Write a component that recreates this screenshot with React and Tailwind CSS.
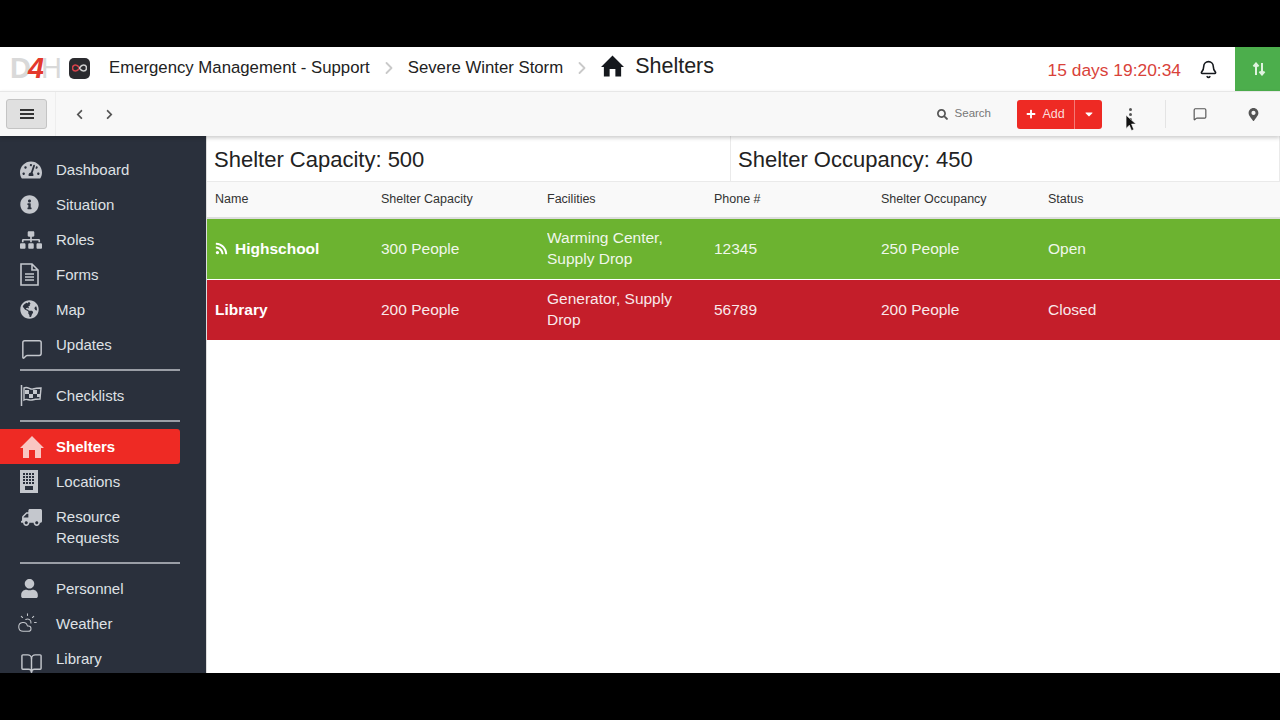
import React from "react";
import { FaTachometerAlt, FaInfoCircle, FaSitemap, FaGlobeAmericas, FaTruck, FaUser, FaRss, FaSearch, FaPlus, FaCaretDown, FaMapMarkerAlt, FaChevronLeft, FaChevronRight } from "react-icons/fa";
import { MessageSquare, CloudSun, BookOpen, Bell, ChevronRight } from "lucide-react";

const HomeIcon = ({ w, h, className = "" }) => (
  <svg width={w} height={h} viewBox="0 0 24 22" fill="currentColor" className={className}>
    <path d="M12 0 24 12h-3v10h-6v-8H9v8H3V12H0z" />
  </svg>
);

const FileIcon = () => (
  <svg width="19" height="23" viewBox="0 0 19 23" fill="none" stroke="currentColor" strokeWidth="1.6">
    <path d="M1 1h11l6 6v15H1zM12 1v6h6M5 11h9M5 14h9M5 17h9" />
  </svg>
);

const FlagIcon = () => (
  <svg width="23" height="23" viewBox="0 0 23 23" fill="none">
    <path d="M1.5 1v21" stroke="currentColor" strokeWidth="1.5" />
    <path d="M4 4c4-2 6 2 9 1s5-1 8-1l-1 11c-3 0-5 0-8 1s-5-2-8 0z" stroke="currentColor" strokeWidth="1.4" />
    <path d="M5 6h4v4H5zM13 6h4v4h-4zM9 10h4v4H9zM17 10h3v3h-3z" fill="currentColor" />
  </svg>
);

const BuildingIcon = () => {
  const dots = [];
  for (let y = 3; y < 14; y += 3) for (let x = 3; x < 15; x += 3) dots.push(<rect key={`${x}-${y}`} x={x} y={y} width="2" height="2" fill="#2a303c" />);
  return (
    <svg width="18" height="23" viewBox="0 0 18 23">
      <rect width="18" height="23" fill="currentColor" />
      {dots}
      <path d="M5 16h8v4H5z" fill="#2a303c" />
    </svg>
  );
};

const Item = ({ icon, label, active, cls = "" }) => (
  <div className={`flex items-center h-[35px] w-[180px] shrink-0 rounded-r-[3px] ${active ? "bg-[#ee2a24] font-bold text-white" : "text-[#dfe1e5]"} ${cls}`}>
    <div className={`w-[56px] h-full shrink-0 flex items-center pl-[20px] ${active ? "text-[#f9c6c2]" : "text-[#c4c7cd]"}`}>{icon}</div>
    <span className="leading-[21px]">{label}</span>
  </div>
);

const Divider = () => <div className="h-[2px] w-[160px] ml-[20px] bg-[#9a9ea6] shrink-0" />;

const COLS = "grid grid-cols-[166px_166px_167px_167px_167px_1fr] items-center";

const Row = ({ bg, name, icon, cap, fac, phone, occ, status }) => (
  <div className={`${COLS} h-[60px] pb-[2px] mb-[1px] text-white text-[15.5px] leading-[21px] ${bg}`}>
    <div className="pl-2 flex items-center gap-[7px] font-bold">{icon}{name}</div>
    <div className="pl-2 opacity-90">{cap}</div>
    <div className="pl-2 pr-6 opacity-90">{fac}</div>
    <div className="pl-2 opacity-90">{phone}</div>
    <div className="pl-2 opacity-90">{occ}</div>
    <div className="pl-2 opacity-90">{status}</div>
  </div>
);

export default function App() {
  return (
    <div className="h-screen w-[1280px] flex flex-col bg-black overflow-hidden font-['Liberation_Sans',Arial,sans-serif]">
      <div className="h-[47px] shrink-0 bg-black" />
      <div className="flex-1 min-h-0 flex flex-col bg-white overflow-hidden">
        {/* top bar */}
        <div className="h-[44px] shrink-0 flex items-center bg-white text-[#222]">
          <div className="w-[109px] shrink-0 flex items-center pl-[10px] -mt-[2px]">
            <span className="w-[56px] text-[29px] leading-none font-bold tracking-[-3px] text-[#d9d9d9]">D<span className="text-[#e4392c] italic">4</span><span className="font-normal">H</span></span>
            <div className="w-[21px] h-[21px] ml-[3px] rounded-[5px] bg-[#2b2b2f] flex items-center justify-center">
              <svg width="15" height="8" viewBox="0 0 30 16" fill="none" strokeWidth="3"><path d="M15 8C12 3 9 2 7 2a6 6 0 0 0 0 12c2 0 5-1 8-6" stroke="#d8434b" /><path d="M15 8c3-5 6-6 8-6a6 6 0 0 1 0 12c-2 0-5-1-8-6" stroke="#cfcfcf" /></svg>
            </div>
          </div>
          <span className="text-[16.75px] -mt-[3px]">Emergency Management - Support</span>
          <ChevronRight size={20} className="text-[#c9c9c9] ml-[9px] mr-[9px] -mt-[3px]" strokeWidth={2.2} />
          <span className="text-[16.75px] -mt-[3px]">Severe Winter Storm</span>
          <ChevronRight size={20} className="text-[#c9c9c9] ml-[9px] mr-[9px] -mt-[3px]" strokeWidth={2.2} />
          <HomeIcon w={23} h={22} className="text-[#15181d] -mt-[7px] mr-[11px]" />
          <span className="text-[21.5px] -mt-[6px]">Shelters</span>
          <span className="ml-auto text-[17.4px] text-[#d9423a] mt-[3px]">15 days 19:20:34</span>
          <Bell size={19} className="ml-[18px] text-[#15181d] mr-[17px]" strokeWidth={2} />
          <div className="w-[45px] h-full bg-[#4cae4c] flex items-center justify-center pl-[2px]">
            <svg width="14" height="14" viewBox="0 0 14 14" fill="none" stroke="#dff3df" strokeWidth="2"><path d="M4 13V2M1.5 4.5 4 1.5l2.5 3M10 1v11M7.5 9.5l2.5 3 2.5-3" /></svg>
          </div>
        </div>
        {/* toolbar */}
        <div className="h-[45px] shrink-0 flex items-center bg-[#f8f8f8] border-t border-[#e7e7e7] shadow-[0_2px_4px_rgba(0,0,0,0.2)] z-10 text-[#666]">
          <div className="w-[56px] h-full flex items-center pl-[6px] border-r border-[#eeeeee]">
            <div className="w-[41px] h-[30px] rounded-[3px] bg-[#e0e0e0] border border-[#c4c4c4] flex flex-col gap-[2px] items-center justify-center">
              <div className="w-[14px] h-[2px] bg-[#333]" /><div className="w-[14px] h-[2px] bg-[#333]" /><div className="w-[14px] h-[2px] bg-[#333]" />
            </div>
          </div>
          <FaChevronLeft size={11} className="ml-[18px] text-[#555]" />
          <FaChevronRight size={11} className="ml-[19px] text-[#555]" />
          <FaSearch size={11} className="ml-auto text-[#555]" />
          <span className="ml-[7px] text-[11.5px] text-[#777]">Search</span>
          <div className="ml-[26px] w-[85px] h-[29px] rounded-[3px] bg-[#ee2a24] flex items-center text-white">
            <div className="w-[58px] flex items-center justify-center gap-[6px] border-r border-[#f47a76] h-full text-[12.5px]">
              <FaPlus size={10} /><span className="text-[#fbdcda]">Add</span>
            </div>
            <FaCaretDown size={12} className="ml-[8px]" />
          </div>
          <div className="relative ml-[26px] w-[4px] flex flex-col gap-[2px] items-center">
            <div className="w-[3px] h-[3px] rounded-full bg-[#555]" /><div className="w-[3px] h-[3px] rounded-full bg-[#555]" /><div className="w-[3px] h-[3px] rounded-full bg-[#555]" />
            <svg className="absolute left-[-3px] top-[6px]" width="12" height="19" viewBox="0 0 11 17"><path d="M1 1v12l3-3 2 5 2-1-2-5h4z" fill="#111" stroke="#fff" strokeWidth="0.5" /></svg>
          </div>
          <div className="ml-[33px] h-[28px] w-px bg-[#e4e4e4]" />
          <MessageSquare size={14} className="ml-[27px] text-[#555]" />
          <FaMapMarkerAlt size={13} className="ml-[40px] mr-[20px] text-[#555]" />
        </div>
        {/* body */}
        <div className="flex-1 min-h-0 flex overflow-hidden">
          <div className="w-[206px] shrink-0 bg-[#2a303c] flex flex-col text-[15px] pt-[16px] overflow-hidden">
            <Item label="Dashboard" icon={<FaTachometerAlt size={22} />} />
            <Item label="Situation" icon={<FaInfoCircle size={19} />} />
            <Item label="Roles" icon={<FaSitemap size={22} />} />
            <Item label="Forms" icon={<FileIcon />} />
            <Item label="Map" icon={<FaGlobeAmericas size={19} />} />
            <Item label="Updates" icon={<MessageSquare size={22} className="ml-[1px] mt-[8px]" strokeWidth={1.6} />} cls="mb-[7px]" />
            <Divider />
            <Item label="Checklists" icon={<FlagIcon />} cls="mt-[7px] mb-[7px]" />
            <Divider />
            <Item label="Shelters" active icon={<HomeIcon w={24} h={22} />} cls="mt-[7px]" />
            <Item label="Locations" icon={<BuildingIcon />} />
            <div className="flex items-start w-[180px] text-[#dfe1e5] shrink-0 pt-[7px] pb-[14px]">
              <div className="w-[56px] shrink-0 flex pl-[21px] text-[#c4c7cd] pt-[1px]"><FaTruck size={21} className="-scale-x-100" /></div>
              <span className="leading-[21px]">Resource<br />Requests</span>
            </div>
            <Divider />
            <Item label="Personnel" icon={<FaUser size={19} />} cls="mt-[7px]" />
            <Item label="Weather" icon={<CloudSun size={21} strokeWidth={1.2} className="-ml-[3px] -mt-[3px]" />} />
            <Item label="Library" icon={<BookOpen size={23} strokeWidth={1.5} className="mt-[9px]" />} />
          </div>
          <div className="flex-1 min-w-0 border-l border-[#ddd]">
            <div className="h-[46px] flex border-b border-[#eaeaea] text-[22px] text-[#222]">
              <div className="w-[524px] flex items-center pl-[7px] pt-[2px] border-r border-[#eaeaea]">Shelter Capacity: 500</div>
              <div className="flex-1 flex items-center pl-[7px] pt-[2px] border-r border-[#eaeaea]">Shelter Occupancy: 450</div>
            </div>
            <div className={`${COLS} h-[37px] bg-[#f9f9f9] border-b-2 border-[#dddddd] text-[12.5px] text-[#333]`}>
              {["Name", "Shelter Capacity", "Facilities", "Phone #", "Shelter Occupancy", "Status"].map((h) => <div key={h} className="pl-2">{h}</div>)}
            </div>
            <Row bg="bg-[#6cb330]" name="Highschool" icon={<FaRss size={13} />} cap="300 People" fac="Warming Center, Supply Drop" phone="12345" occ="250 People" status="Open" />
            <Row bg="bg-[#c41e2a]" name="Library" cap="200 People" fac="Generator, Supply Drop" phone="56789" occ="200 People" status="Closed" />
          </div>
        </div>
      </div>
      <div className="h-[47px] shrink-0 bg-black" />
    </div>
  );
}
